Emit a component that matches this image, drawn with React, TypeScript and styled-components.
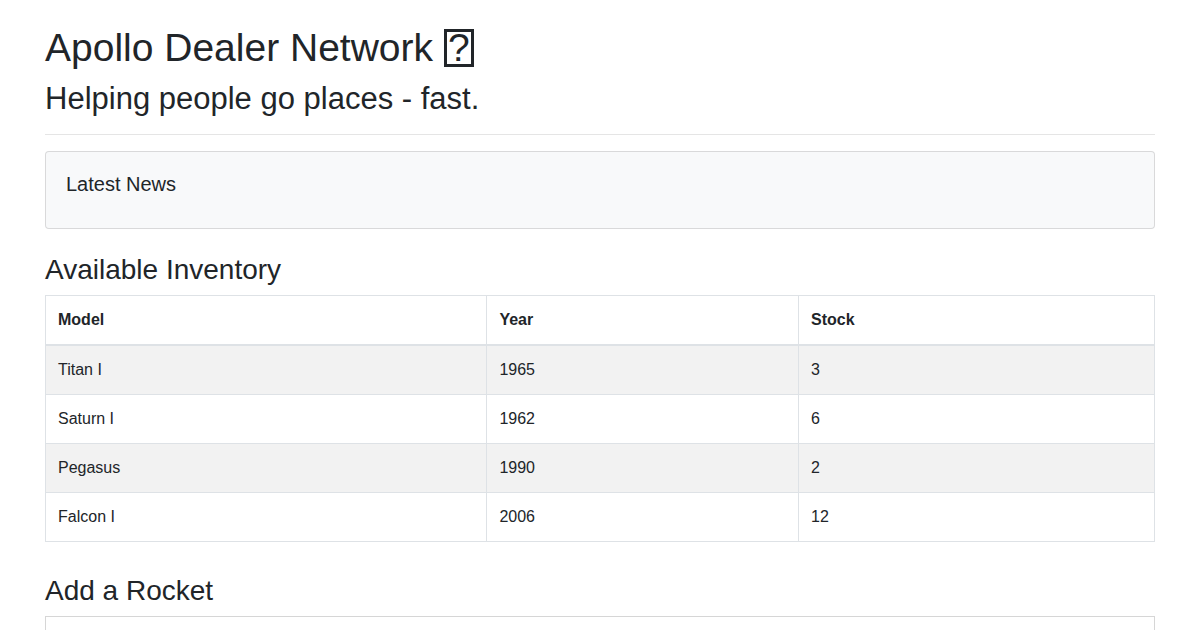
import React from "react";
import styled, { createGlobalStyle } from "styled-components";

const GlobalStyle = createGlobalStyle`
  *, *::before, *::after { box-sizing: border-box; }
  body {
    margin: 0;
    background: #fff;
    color: #212529;
    font-family: "Helvetica Neue", Helvetica, "Liberation Sans", Arial, sans-serif;
    font-size: 16px;
    line-height: 24px;
  }
`;

const Container = styled.main`
  max-width: 1140px;
  margin: 0 auto;
  padding: 24px 15px;
`;

const Heading = styled.h1`
  margin: 0 0 8px;
  font-size: 39px;
  font-weight: 500;
  line-height: 48px;
`;

const GlyphBox = styled.span`
  display: inline-block;
  width: 30px;
  height: 38px;
  border: 3px solid currentColor;
  line-height: 32px;
  text-align: center;
`;

const Tagline = styled.h2`
  margin: 0;
  font-size: 31px;
  font-weight: 500;
  line-height: 38px;
`;

const Rule = styled.hr`
  margin: 16px 0;
  border: 0;
  border-top: 1px solid rgba(0, 0, 0, 0.1);
`;

const Card = styled.section`
  margin-bottom: 24px;
  padding: 20px;
  border: 1px solid rgba(0, 0, 0, 0.125);
  border-radius: 4px;
  background: #f8f9fa;
`;

const CardTitle = styled.h5`
  margin: 0 0 12px;
  font-size: 20px;
  font-weight: 500;
  line-height: 24px;
`;

const SectionTitle = styled.h3`
  margin: 0 0 8px;
  font-size: 28px;
  font-weight: 500;
  line-height: 34px;
`;

const Table = styled.table`
  width: 100%;
  margin-bottom: 32px;
  border: 1px solid #dee2e6;
  border-collapse: collapse;
  table-layout: fixed;
`;

const Column = styled.col<{ $share: number }>`
  width: ${({ $share }) => $share}%;
`;

const HeaderCell = styled.th`
  padding: 12px;
  border: 1px solid #dee2e6;
  border-bottom-width: 2px;
  text-align: left;
`;

const Row = styled.tr`
  &:nth-of-type(odd) { background: rgba(0, 0, 0, 0.05); }
`;

const Cell = styled.td`
  padding: 12px;
  border: 1px solid #dee2e6;
`;

const FormPanel = styled.form`
  min-height: 120px;
  padding: 20px;
  border: 1px solid #d6d6d6;
`;

const rockets = [
  { model: "Titan I", year: 1965, stock: 3 },
  { model: "Saturn I", year: 1962, stock: 6 },
  { model: "Pegasus", year: 1990, stock: 2 },
  { model: "Falcon I", year: 2006, stock: 12 },
];

export default function App() {
  return (
    <>
      <GlobalStyle />
      <Container>
        <header>
          <Heading>
            Apollo Dealer Network <GlyphBox>?</GlyphBox>
          </Heading>
          <Tagline>Helping people go places - fast.</Tagline>
        </header>
        <Rule />
        <Card>
          <CardTitle>Latest News</CardTitle>
        </Card>
        <SectionTitle>Available Inventory</SectionTitle>
        <Table>
          <colgroup>
            <Column $share={39.8} />
            <Column $share={28.1} />
            <Column $share={32.1} />
          </colgroup>
          <thead>
            <tr>
              <HeaderCell scope="col">Model</HeaderCell>
              <HeaderCell scope="col">Year</HeaderCell>
              <HeaderCell scope="col">Stock</HeaderCell>
            </tr>
          </thead>
          <tbody>
            {rockets.map((rocket) => (
              <Row key={rocket.model}>
                <Cell>{rocket.model}</Cell>
                <Cell>{rocket.year}</Cell>
                <Cell>{rocket.stock}</Cell>
              </Row>
            ))}
          </tbody>
        </Table>
        <SectionTitle id="add-rocket">Add a Rocket</SectionTitle>
        <FormPanel aria-labelledby="add-rocket" />
      </Container>
    </>
  );
}
